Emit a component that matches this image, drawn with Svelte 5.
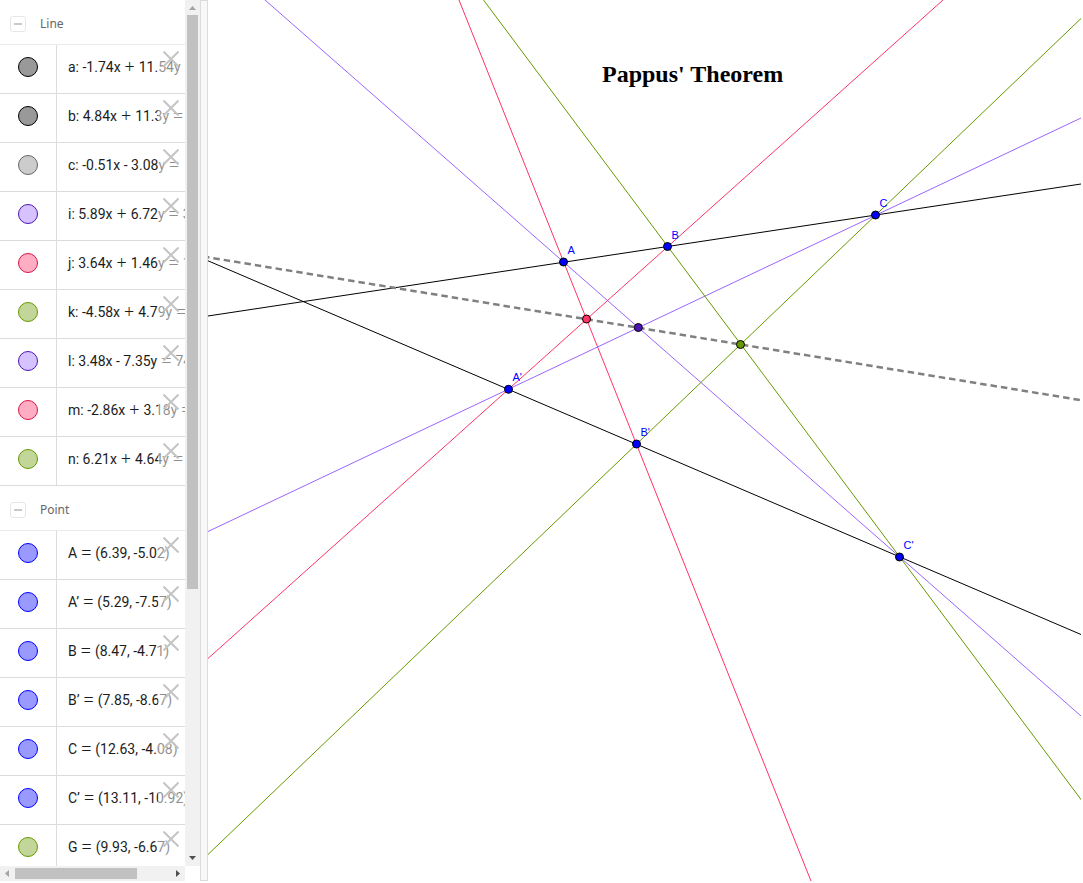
<script>
  const palette = {
    black: { fill: '#999999', edge: '#000000' },
    gray: { fill: '#cccccc', edge: '#666666' },
    purple: { fill: '#d6c2ff', edge: '#4d14b3' },
    pink: { fill: '#ffadc2', edge: '#d61447' },
    green: { fill: '#c2d699', edge: '#669900' },
    blue: { fill: '#9999ff', edge: '#0000ff' }
  };

  const groups = [
    {
      name: 'Line',
      items: [
        { tone: 'black', text: 'a: -1.74x + 11.54y =' },
        { tone: 'black', text: 'b: 4.84x + 11.3y =' },
        { tone: 'gray', text: 'c: -0.51x - 3.08y =' },
        { tone: 'purple', text: 'i: 5.89x + 6.72y = 3' },
        { tone: 'pink', text: 'j: 3.64x + 1.46y = 1' },
        { tone: 'green', text: 'k: -4.58x + 4.79y =' },
        { tone: 'purple', text: 'l: 3.48x - 7.35y = 74' },
        { tone: 'pink', text: 'm: -2.86x + 3.18y =' },
        { tone: 'green', text: 'n: 6.21x + 4.64y =' }
      ]
    },
    {
      name: 'Point',
      items: [
        { tone: 'blue', text: 'A = (6.39, -5.02)' },
        { tone: 'blue', text: 'A’ = (5.29, -7.57)' },
        { tone: 'blue', text: 'B = (8.47, -4.71)' },
        { tone: 'blue', text: 'B’ = (7.85, -8.67)' },
        { tone: 'blue', text: 'C = (12.63, -4.08)' },
        { tone: 'blue', text: 'C’ = (13.11, -10.92)' },
        { tone: 'green', text: 'G = (9.93, -6.67)' }
      ]
    }
  ];

  let closed = $state({});

  const split = (text) => text.split(/ ([+=])(?: |$)/);

  // Each line is given by two points and drawn well past both of them.
  const extend = ([x1, y1, x2, y2]) => {
    const dx = x2 - x1;
    const dy = y2 - y1;
    return { x1: x1 - dx * 3, y1: y1 - dy * 3, x2: x2 + dx * 3, y2: y2 + dy * 3 };
  };

  const lines = [
    { ends: [57, 0, 873, 716], color: '#9966ff' },
    { ends: [0, 531.5, 873, 118], color: '#9966ff' },
    { ends: [251, 0, 603, 881], color: '#ff3366' },
    { ends: [0, 658.5, 735, 0], color: '#ff3366' },
    { ends: [275.5, 0, 873, 799.5], color: '#669900' },
    { ends: [0, 854.5, 873, 18.5], color: '#669900' },
    { ends: [0, 316, 873, 184], color: '#000000' },
    { ends: [0, 260.8, 873, 634.5], color: '#000000' }
  ].map((l) => ({ ...extend(l.ends), color: l.color }));

  const points = [
    { x: 355.5, y: 262, color: '#0000ff', label: 'A' },
    { x: 459.5, y: 246.5, color: '#0000ff', label: 'B' },
    { x: 667.5, y: 215, color: '#0000ff', label: 'C' },
    { x: 300.5, y: 389.3, color: '#0000ff', label: "A'" },
    { x: 428.5, y: 444, color: '#0000ff', label: "B'" },
    { x: 691.5, y: 557, color: '#0000ff', label: "C'" },
    { x: 378.5, y: 319, color: '#ff3366' },
    { x: 430.3, y: 327.5, color: '#4d14b3' },
    { x: 532.5, y: 344.5, color: '#669900' }
  ];
</script>

<div class="app">
  <aside>
    <div class="list">
      {#each groups as group}
        <section>
          <header>
            <button
              class="toggle"
              aria-label="Toggle {group.name}"
              onclick={() => (closed[group.name] = !closed[group.name])}
            ></button>
            <h2>{group.name}</h2>
          </header>
          {#if !closed[group.name]}
            {#each group.items as item}
              <div class="row">
                <div class="marble">
                  <button
                    aria-label="Show or hide"
                    style:background={palette[item.tone].fill}
                    style:border-color={palette[item.tone].edge}
                  ></button>
                </div>
                <div class="formula">
                  {#each split(item.text) as part, i}<span class:op={i % 2}>{part}</span>{/each}
                </div>
                <button class="remove" aria-label="Delete">
                  <svg width="16" height="16" viewBox="0 0 16 16"><path d="M0.5 0.5 15.5 15.5M15.5 0.5 0.5 15.5" /></svg>
                </button>
              </div>
            {/each}
          {/if}
        </section>
      {/each}
    </div>
    <div class="bar vertical">
      <svg width="15" height="15"><path d="M4 10 7.5 6 11 10Z" fill="#a3a3a3" /></svg>
      <div class="track"><div class="thumb"></div></div>
      <svg width="15" height="15"><path d="M4 5 7.5 9 11 5Z" fill="#505050" /></svg>
    </div>
    <div class="bar horizontal">
      <svg width="15" height="15"><path d="M9 4 5 7.5 9 11Z" fill="#a3a3a3" /></svg>
      <div class="track"><div class="thumb"></div></div>
      <svg width="15" height="15"><path d="M6 4 10 7.5 6 11Z" fill="#505050" /></svg>
    </div>
  </aside>
  <div class="splitter"></div>
  <main>
    <svg class="board">
      {#each lines as l}
        <line x1={l.x1} y1={l.y1} x2={l.x2} y2={l.y2} stroke={l.color} />
      {/each}
      <line class="dashed" x1="-5" y1="256.5" x2="1746" y2="543" />
      {#each points as p}
        <circle cx={p.x} cy={p.y} r="4" fill={p.color} stroke="#000" />
        {#if p.label}<text class="label" x={p.x + 4} y={p.y - 8}>{p.label}</text>{/if}
      {/each}
      <text class="title" x="394" y="82">Pappus' Theorem</text>
    </svg>
  </main>
</div>

<style>
  .app {
    box-sizing: border-box;
    display: flex;
    height: 100vh;
    padding: 0 2px 2px 0;
    background: #fff;
    font-family: "Noto Sans", sans-serif;
  }
  aside {
    display: grid;
    grid-template: minmax(0, 1fr) 15px / minmax(0, 1fr) 15px;
    flex: 0 0 200px;
  }
  .list {
    overflow: hidden;
  }
  header {
    box-sizing: border-box;
    display: flex;
    align-items: center;
    gap: 14px;
    height: 45px;
    padding: 4px 0 0 10px;
    border-bottom: 1px solid #ebebeb;
  }
  h2 {
    margin: 0;
    font-size: 12px;
    line-height: 16px;
    font-weight: 400;
    color: #666;
  }
  button {
    padding: 0;
    cursor: pointer;
  }
  .toggle {
    box-sizing: border-box;
    display: grid;
    place-items: center;
    width: 16px;
    height: 16px;
    border: 1px solid #e6e6e6;
    border-radius: 3px;
    background: #fff;
  }
  .toggle::before {
    content: "";
    width: 8px;
    height: 2px;
    background: #c8c8c8;
  }
  .row {
    position: relative;
    box-sizing: border-box;
    display: flex;
    height: 49px;
    border-bottom: 1px solid #dcdcdc;
    overflow: hidden;
  }
  .marble {
    box-sizing: border-box;
    flex: 0 0 57px;
    padding: 12px 0 0 18px;
    border-right: 1px solid #dcdcdc;
  }
  .marble button {
    box-sizing: border-box;
    display: block;
    width: 20px;
    height: 20px;
    border: 1px solid;
    border-radius: 50%;
  }
  .formula {
    display: flex;
    gap: 4px;
    padding-left: 11px;
    font-family: Roboto, sans-serif;
    font-size: 14px;
    line-height: 45px;
    white-space: nowrap;
    color: #1c1c1c;
  }
  .op {
    font-family: "Liberation Serif", serif;
    font-size: 18px;
  }
  .remove {
    position: absolute;
    top: 0;
    right: 0;
    display: flex;
    align-items: flex-start;
    width: 27px;
    height: 48px;
    padding: 6px 0 0 5px;
    border: 0;
    background: rgba(255, 255, 255, 0.5);
  }
  .remove path {
    fill: none;
    stroke: #c4c4c4;
    stroke-width: 2;
  }
  .bar {
    display: flex;
    background: #f1f1f1;
  }
  .bar svg {
    flex: none;
  }
  .track {
    flex: 1;
  }
  .thumb {
    background: #c1c1c1;
  }
  .vertical {
    flex-direction: column;
  }
  .vertical .thumb {
    width: 11px;
    height: 68.7%;
    margin-left: 2px;
  }
  .horizontal .thumb {
    width: 79%;
    height: 11px;
    margin-top: 2px;
  }
  .splitter {
    flex: 0 0 6px;
    border: 1px solid #dcdcdc;
    background: #f8f8f8;
  }
  main {
    flex: 1;
    min-width: 0;
  }
  .board {
    display: block;
    width: 100%;
    height: 100%;
  }
  .dashed {
    stroke: #808080;
    stroke-width: 2.5;
    stroke-dasharray: 6.5 4;
  }
  .label {
    font: 11px "Liberation Sans", sans-serif;
    fill: #00f;
  }
  .title {
    font: bold 24px "Liberation Serif", serif;
    fill: #000;
  }
</style>
